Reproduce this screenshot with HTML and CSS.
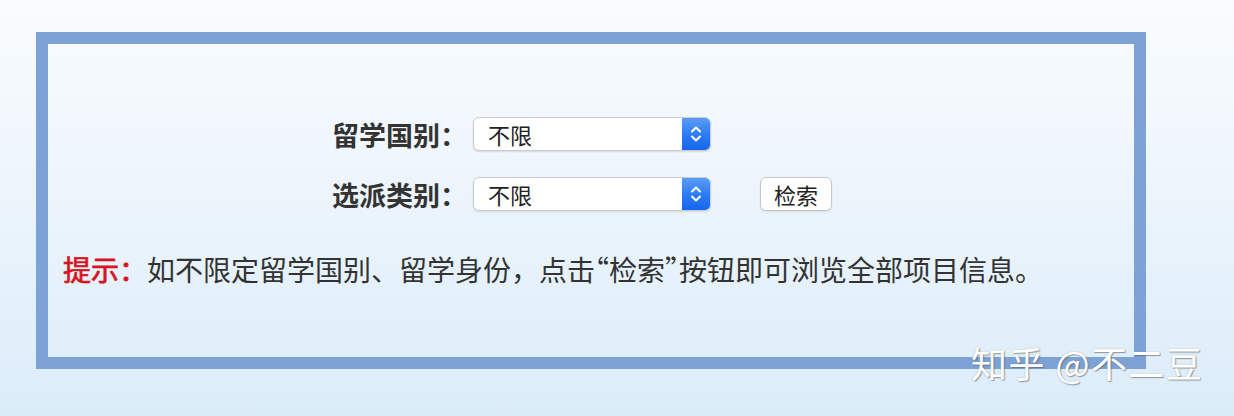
FILE: index.html
```html
<!DOCTYPE html>
<html lang="zh-CN">
<head>
<meta charset="utf-8">
<title>检索</title>
<link rel="stylesheet" href="styles.css">
</head>
<body>
<div class="panel">
  <div class="form">
    <div class="row">
      <span class="label">留学国别：</span>
      <div class="select">
        <span class="select-value">不限</span>
        <span class="select-arrow">
          <svg width="12" height="20" viewBox="0 0 12 20"><path d="M2 7.5 L6 3.5 L10 7.5 M2 12.5 L6 16.5 L10 12.5" fill="none" stroke="#fff" stroke-width="2" stroke-linecap="round" stroke-linejoin="round"/></svg>
        </span>
      </div>
    </div>
    <div class="row">
      <span class="label">选派类别：</span>
      <div class="select">
        <span class="select-value">不限</span>
        <span class="select-arrow">
          <svg width="12" height="20" viewBox="0 0 12 20"><path d="M2 7.5 L6 3.5 L10 7.5 M2 12.5 L6 16.5 L10 12.5" fill="none" stroke="#fff" stroke-width="2" stroke-linecap="round" stroke-linejoin="round"/></svg>
        </span>
      </div>
      <button class="btn" type="button">检索</button>
    </div>
  </div>
  <p class="hint"><span class="hint-title">提示：</span>如不限定留学国别、留学身份，点击<span class="q">“</span>检索<span class="q">”</span>按钮即可浏览全部项目信息。</p>
</div>
<div class="watermark">知乎 @不二豆</div>
</body>
</html>
```
FILE: styles.css
```css
html, body {
  margin: 0;
  padding: 0;
}
body {
  width: 1234px;
  height: 416px;
  overflow: hidden;
  position: relative;
  background: linear-gradient(to bottom, #f9fcfe 0%, #edf5fc 45%, #dbecf9 100%);
  font-family: "Noto Sans CJK SC", "Noto Sans", sans-serif;
  color: #333;
}
.panel {
  box-sizing: border-box;
  width: 1110px;
  height: 337px;
  margin: 32px 0 0 36px;
  border: 12px solid #7ca2d6;
  padding: 73px 0 0 15px;
}
.form {
  display: flex;
  flex-direction: column;
  gap: 26px;
  padding-left: 269px;
}
.row {
  display: flex;
  align-items: center;
  height: 34px;
}
.label {
  font-size: 27px;
  font-weight: bold;
  line-height: 34px;
  color: #333;
  margin-right: 6px;
  position: relative;
  top: 1px;
}
.select {
  box-sizing: border-box;
  width: 238px;
  height: 34px;
  display: flex;
  align-items: stretch;
  background: #fff;
  border: 1px solid #c9cbcf;
  border-radius: 6px;
  box-shadow: 0 1px 2px rgba(0, 0, 0, 0.12);
  overflow: hidden;
}
.select-value {
  flex: 1;
  font-size: 22px;
  line-height: 32px;
  padding-left: 14px;
  color: #222;
}
.select-arrow {
  width: 28px;
  display: flex;
  align-items: center;
  justify-content: center;
  background: linear-gradient(to bottom, #5a9cf8 0%, #2a7bf2 55%, #1467ee 100%);
}
.btn {
  box-sizing: border-box;
  margin-left: 49px;
  width: 72px;
  height: 34px;
  padding: 0;
  background: #fff;
  border: 1px solid #c4c6ca;
  border-radius: 6px;
  box-shadow: 0 1px 2px rgba(0, 0, 0, 0.1);
  font-family: "Noto Sans CJK SC", sans-serif;
  font-size: 22px;
  line-height: 32px;
  color: #222;
}
.hint {
  margin: 38px 0 0 0;
  font-size: 28px;
  line-height: 40px;
  color: #333;
}
.hint-title {
  color: #d8141e;
  font-weight: normal;
  -webkit-text-stroke: 0.7px #d8141e;
}
.q {
  font-feature-settings: "halt";
}
.watermark {
  position: absolute;
  left: 971px;
  top: 337px;
  font-family: "Noto Sans CJK SC", sans-serif;
  font-size: 36px;
  letter-spacing: 1.5px;
  line-height: 50px;
  color: #fff;
  text-shadow: 1px 1px 1px rgba(90, 90, 90, 0.55), 0 0 2px rgba(120, 120, 120, 0.35);
  white-space: nowrap;
}
```
